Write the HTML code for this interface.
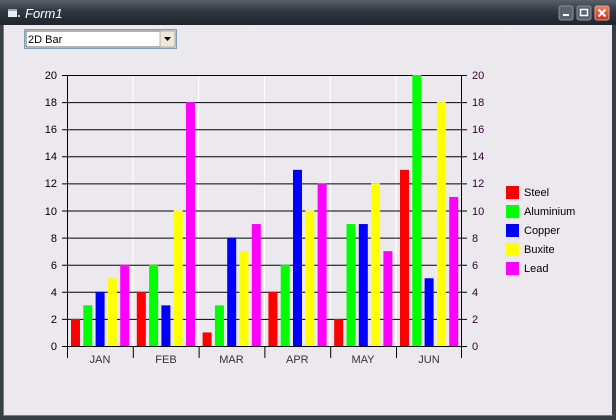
<!DOCTYPE html>
<html><head><style>
html,body{margin:0;padding:0;width:616px;height:420px;overflow:hidden;background:#ece9ee;font-family:"Liberation Sans",sans-serif}
</style></head><body>
<svg width="616" height="420" xmlns="http://www.w3.org/2000/svg" style="position:absolute;left:0;top:0">
<defs>
<linearGradient id="tb" x1="0" y1="0" x2="0" y2="1"><stop offset="0" stop-color="#5a6068"/><stop offset="0.4" stop-color="#333a44"/><stop offset="1" stop-color="#1e242c"/></linearGradient>
<linearGradient id="cl" x1="0" y1="0" x2="0" y2="1"><stop offset="0" stop-color="#f08060"/><stop offset="1" stop-color="#c83018"/></linearGradient>
</defs>
<rect x="0" y="0" width="616" height="420" fill="#3a3f46"/>
<rect x="0" y="0" width="616" height="25" fill="url(#tb)"/>
<rect x="4" y="25" width="608" height="390" fill="#ece9ee"/>
<rect x="3" y="25" width="1" height="391" fill="#7a7f86"/>
<rect x="3" y="415" width="610" height="1" fill="#7a7f86"/>
<!-- title icon -->
<rect x="8" y="9" width="9" height="8" fill="#e8eef0"/><rect x="8" y="9" width="9" height="2" fill="#9ab"/><rect x="18" y="15" width="2" height="2" fill="#ccc"/>
<text x="25" y="18" font-size="13" font-style="italic" fill="#fff">Form1</text>
<!-- buttons -->
<rect x="559" y="6" width="14" height="14" rx="2" fill="#5c636c" stroke="#8a9098"/><rect x="563" y="14" width="6" height="2" fill="#fff"/>
<rect x="577" y="6" width="14" height="14" rx="2" fill="#5c636c" stroke="#8a9098"/><rect x="580.5" y="9.5" width="7" height="6" fill="none" stroke="#fff" stroke-width="1.5"/>
<rect x="595" y="6" width="14" height="14" rx="2" fill="url(#cl)" stroke="#e0a090"/><path d="M598.5 9.5l7 7M605.5 9.5l-7 7" stroke="#fff" stroke-width="2"/>
<!-- combo -->
<rect x="24.5" y="29.5" width="152" height="19" fill="#fff" stroke="#7f9db9"/>
<rect x="26" y="31" width="149" height="16" fill="#fff" stroke="#000" stroke-width="0.6"/>
<text x="28" y="43" font-size="11" fill="#000">2D Bar</text>
<rect x="160" y="31" width="15" height="16" fill="#ece9d8" stroke="#888" stroke-width="0.6"/>
<path d="M164 37h7l-3.5 4z" fill="#000"/>
<!-- vertical grid white -->
<g stroke="#fff" stroke-width="1">
<line x1="132.8" y1="75" x2="132.8" y2="346"/><line x1="198.6" y1="75" x2="198.6" y2="346"/><line x1="264.4" y1="75" x2="264.4" y2="346"/><line x1="330.2" y1="75" x2="330.2" y2="346"/><line x1="396" y1="75" x2="396" y2="346"/>
</g>
<!-- horizontal grid -->
<g stroke="#000" stroke-width="1">
<line x1="62" y1="75.5" x2="467" y2="75.5"/><line x1="62" y1="102.6" x2="467" y2="102.6"/><line x1="62" y1="129.7" x2="467" y2="129.7"/><line x1="62" y1="156.8" x2="467" y2="156.8"/><line x1="62" y1="183.9" x2="467" y2="183.9"/><line x1="62" y1="211" x2="467" y2="211"/><line x1="62" y1="238.1" x2="467" y2="238.1"/><line x1="62" y1="265.2" x2="467" y2="265.2"/><line x1="62" y1="292.3" x2="467" y2="292.3"/><line x1="62" y1="319.4" x2="467" y2="319.4"/><line x1="62" y1="346.5" x2="467" y2="346.5"/>
<line x1="67.5" y1="75" x2="67.5" y2="358"/><line x1="461.5" y1="75" x2="461.5" y2="358"/>
<line x1="133.3" y1="346" x2="133.3" y2="358"/><line x1="199.1" y1="346" x2="199.1" y2="358"/><line x1="264.9" y1="346" x2="264.9" y2="358"/><line x1="330.7" y1="346" x2="330.7" y2="358"/><line x1="396.5" y1="346" x2="396.5" y2="358"/>
</g>
<!-- bars -->
<g transform="translate(0,346) scale(1,-1)">
<rect x="71" width="9" height="27.1" fill="#f00"/><rect x="83.3" width="9" height="40.65" fill="#0f0"/><rect x="95.6" width="9" height="54.2" fill="#00f"/><rect x="107.9" width="9" height="67.75" fill="#ff0"/><rect x="120.2" width="9" height="81.3" fill="#f0f"/>
<rect x="136.8" width="9" height="54.2" fill="#f00"/><rect x="149.1" width="9" height="81.3" fill="#0f0"/><rect x="161.4" width="9" height="40.65" fill="#00f"/><rect x="173.7" width="9" height="135.5" fill="#ff0"/><rect x="186" width="9" height="243.9" fill="#f0f"/>
<rect x="202.6" width="9" height="13.55" fill="#f00"/><rect x="214.9" width="9" height="40.65" fill="#0f0"/><rect x="227.2" width="9" height="108.4" fill="#00f"/><rect x="239.5" width="9" height="94.85" fill="#ff0"/><rect x="251.8" width="9" height="121.95" fill="#f0f"/>
<rect x="268.4" width="9" height="54.2" fill="#f00"/><rect x="280.7" width="9" height="81.3" fill="#0f0"/><rect x="293" width="9" height="176.15" fill="#00f"/><rect x="305.3" width="9" height="135.5" fill="#ff0"/><rect x="317.6" width="9" height="162.6" fill="#f0f"/>
<rect x="334.2" width="9" height="27.1" fill="#f00"/><rect x="346.5" width="9" height="121.95" fill="#0f0"/><rect x="358.8" width="9" height="121.95" fill="#00f"/><rect x="371.1" width="9" height="162.6" fill="#ff0"/><rect x="383.4" width="9" height="94.85" fill="#f0f"/>
<rect x="400" width="9" height="176.15" fill="#f00"/><rect x="412.3" width="9" height="271" fill="#0f0"/><rect x="424.6" width="9" height="67.75" fill="#00f"/><rect x="436.9" width="9" height="243.9" fill="#ff0"/><rect x="449.2" width="9" height="149.05" fill="#f0f"/>
</g>
<!-- left labels -->
<g font-size="11" fill="#000" text-anchor="end">
<text x="57" y="79">20</text><text x="57" y="106">18</text><text x="57" y="133">16</text><text x="57" y="160">14</text><text x="57" y="187">12</text><text x="57" y="215">10</text><text x="57" y="242">8</text><text x="57" y="269">6</text><text x="57" y="296">4</text><text x="57" y="323">2</text><text x="57" y="350">0</text>
</g>
<g font-size="11" fill="#300030">
<text x="472" y="79">20</text><text x="472" y="106">18</text><text x="472" y="133">16</text><text x="472" y="160">14</text><text x="472" y="187">12</text><text x="472" y="215">10</text><text x="472" y="242">8</text><text x="472" y="269">6</text><text x="472" y="296">4</text><text x="472" y="323">2</text><text x="472" y="350">0</text>
</g>
<g font-size="11" fill="#333" text-anchor="middle">
<text x="100" y="363">JAN</text><text x="166" y="363">FEB</text><text x="231.5" y="363">MAR</text><text x="297.3" y="363">APR</text><text x="363" y="363">MAY</text><text x="429" y="363">JUN</text>
</g>
<!-- legend -->
<rect x="506" y="186" width="13" height="13" fill="#f00"/><text x="524" y="196" font-size="11" fill="#000">Steel</text>
<rect x="506" y="205" width="13" height="13" fill="#0f0"/><text x="524" y="215" font-size="11" fill="#000">Aluminium</text>
<rect x="506" y="224" width="13" height="13" fill="#00f"/><text x="524" y="234" font-size="11" fill="#000">Copper</text>
<rect x="506" y="243" width="13" height="13" fill="#ff0"/><text x="524" y="253" font-size="11" fill="#000">Buxite</text>
<rect x="506" y="262" width="13" height="13" fill="#f0f"/><text x="524" y="272" font-size="11" fill="#000">Lead</text>
</svg>
</body></html>
